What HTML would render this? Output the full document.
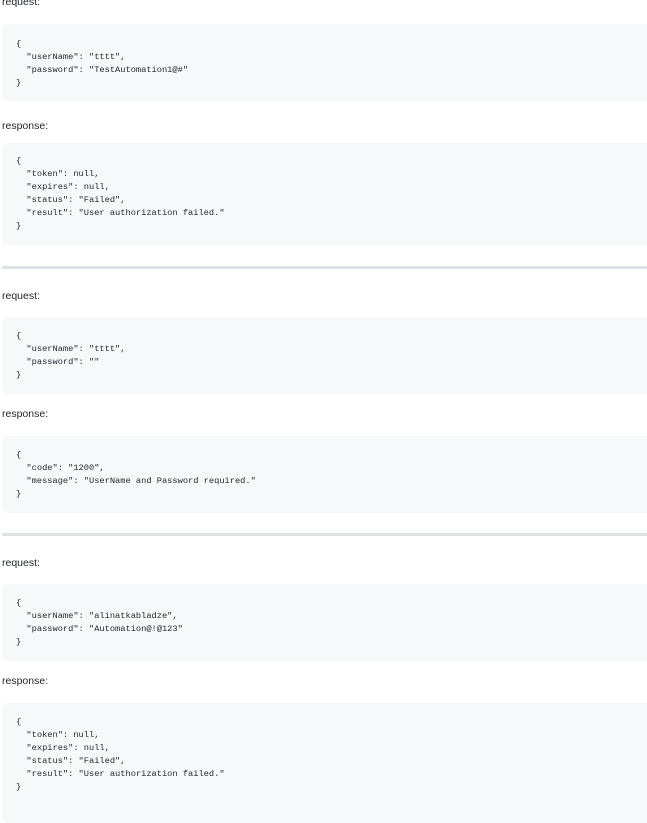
<!DOCTYPE html>
<html><head><meta charset="utf-8"><style>
body{margin:0;width:647px;height:816px;overflow:hidden;background:#fff;position:relative;font-family:"Liberation Sans",sans-serif;}
.l{position:absolute;left:2px;font-size:10.5px;color:#1f2328;line-height:14px;}
.b{position:absolute;left:2px;width:660px;background:#f6f8fa;border-radius:6px;}
.b pre{margin:0;position:absolute;left:14px;font-family:"Liberation Mono",monospace;font-size:8.7px;line-height:13px;color:#24292f;}
.hr{position:absolute;left:2px;width:660px;height:3px;background:#dfe2e6;}
</style></head><body>
<div class="l" style="top:-5px">request:</div>
<div class="b" style="top:24px;height:77px"><pre style="top:14px">{
  "userName": "tttt",
  "password": "TestAutomation1@#"
}</pre></div>
<div class="l" style="top:119px">response:</div>
<div class="b" style="top:143px;height:103px"><pre style="top:12px">{
  "token": null,
  "expires": null,
  "status": "Failed",
  "result": "User authorization failed."
}</pre></div>
<div class="hr" style="top:266px"></div>
<div class="l" style="top:289px">request:</div>
<div class="b" style="top:317px;height:77px"><pre style="top:13px">{
  "userName": "tttt",
  "password": ""
}</pre></div>
<div class="l" style="top:407px">response:</div>
<div class="b" style="top:436px;height:77px"><pre style="top:13px">{
  "code": "1200",
  "message": "UserName and Password required."
}</pre></div>
<div class="hr" style="top:533px"></div>
<div class="l" style="top:556px">request:</div>
<div class="b" style="top:584px;height:77px"><pre style="top:13px">{
  "userName": "alinatkabladze",
  "password": "Automation@!@123"
}</pre></div>
<div class="l" style="top:674px">response:</div>
<div class="b" style="top:703px;height:120px"><pre style="top:13px">{
  "token": null,
  "expires": null,
  "status": "Failed",
  "result": "User authorization failed."
}</pre></div>
</body></html>
